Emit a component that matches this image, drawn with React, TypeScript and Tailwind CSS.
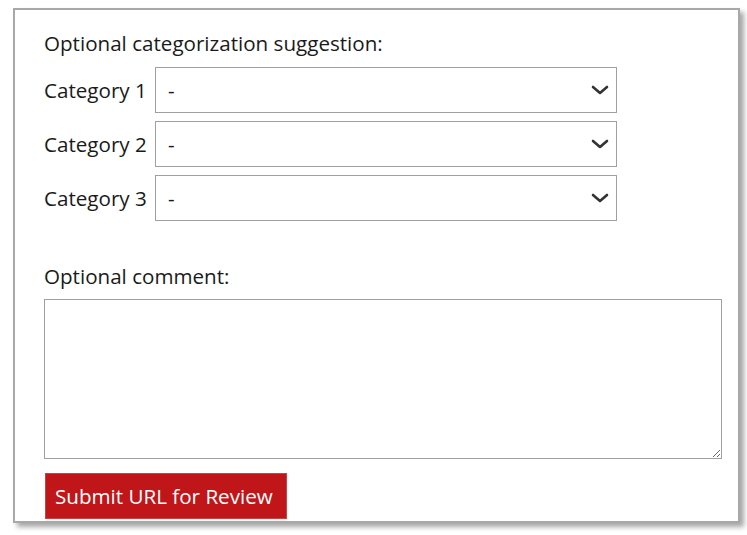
import React from 'react';

function Chevron() {
    return (
        <svg width="18" height="10" viewBox="0 0 18 10" className="absolute right-[8px] top-1/2 -translate-y-1/2 pointer-events-none">
            <polyline points="2,2 9,8 16,2" fill="none" stroke="#333" strokeWidth="2.6" strokeLinecap="round" strokeLinejoin="round" />
        </svg>
    );
}

function CategoryRow({ label }: { label: string }) {
    return (
        <div className="flex items-center gap-[9px]">
            <label className="w-[102px] whitespace-nowrap">{label}</label>
            <div className="relative w-[462px] h-[46px]">
                <select className="appearance-none w-full h-full border border-[#a0a0a0] bg-white pl-[12px] text-[20.6px] text-[#1a1a1a] outline-none">
                    <option>-</option>
                </select>
                <Chevron />
            </div>
        </div>
    );
}

export default function App() {
    return (
        <div className="min-h-screen bg-white pl-[13px] pt-[8px] font-['Open_Sans',sans-serif] text-[20.6px] leading-[26px] text-[#1a1a1a]">
            <div className="w-[727px] h-[515px] border-2 border-[#a8a8a8] bg-white shadow-[4px_4px_5px_rgba(0,0,0,0.35)] pl-[29px] pr-[16px] pt-[20px]">
                <div>Optional categorization suggestion:</div>
                <div className="mt-[11px] flex flex-col gap-[8px]">
                    <CategoryRow label="Category 1" />
                    <CategoryRow label="Category 2" />
                    <CategoryRow label="Category 3" />
                </div>
                <div className="mt-[42px]">Optional comment:</div>
                <textarea className="mt-[10px] block w-[678px] h-[160px] border border-[#a0a0a0] bg-white outline-none" />
                <button className="mt-[14px] ml-[1px] w-[242px] h-[46px] bg-[#c0161a] border border-[#d04040] text-white text-[20.6px] text-left pl-[9px]">
                    Submit URL for Review
                </button>
            </div>
        </div>
    );
}
